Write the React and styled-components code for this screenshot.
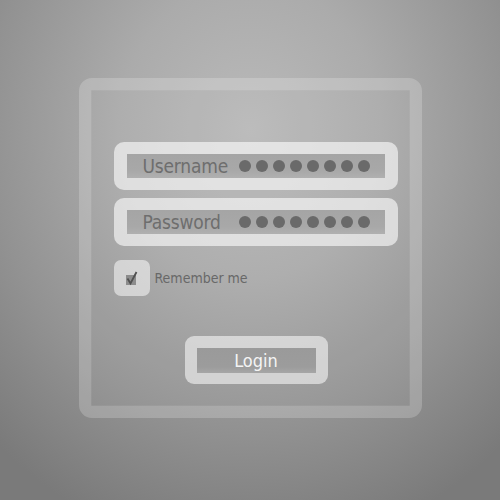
import React from "react";
import styled, { createGlobalStyle } from "styled-components";

const Global = createGlobalStyle`
  html, body { margin: 0; padding: 0; }
  body {
    width: 500px;
    height: 500px;
    overflow: hidden;
    font-family: "DejaVu Sans Condensed", "DejaVu Sans", sans-serif;
  }
`;

const Page = styled.div`
  width: 500px;
  height: 500px;
  box-sizing: border-box;
  padding-top: 78px;
  display: flex;
  justify-content: center;
  align-items: flex-start;
  background: radial-gradient(
    ellipse 75% 85% at 50% 26%,
    #bababa 0%,
    #ababab 35%,
    #929292 70%,
    #7a7a7a 100%
  );
`;

const Frame = styled.div`
  width: 343px;
  height: 340px;
  box-sizing: border-box;
  border: 12px solid rgba(255, 255, 255, 0.2);
  border-radius: 13px;
  box-shadow: inset 0 0 0 1px rgba(255, 255, 255, 0.05);
`;

const Panel = styled.div`
  height: 100%;
  box-sizing: border-box;
  padding: 52px 12px 0 23px;
  background: rgba(255, 255, 255, 0.04);
  display: flex;
  flex-direction: column;
  align-items: flex-start;
`;

const Field = styled.div`
  width: 284px;
  height: 48px;
  box-sizing: border-box;
  padding: 12px 13px;
  border-radius: 10px;
  background: rgba(255, 255, 255, 0.6);
  margin-bottom: ${(p) => p.$gap || 0}px;
`;

const Strip = styled.div`
  height: 24px;
  display: flex;
  align-items: center;
  padding-left: 16px;
  gap: 10px;
  background: linear-gradient(#a5a5a5, #a8a8a8 70%, #b0b0b0);
`;

const Label = styled.span`
  font-size: 19px;
  color: #6e6e6e;
  line-height: 24px;
  letter-spacing: -0.2px;
  width: ${(p) => p.$w}px;
`;

const Dots = styled.div`
  display: flex;
  gap: 5px;
`;

const Dot = styled.span`
  width: 12px;
  height: 12px;
  border-radius: 50%;
  background: #6a6a6a;
`;

const CheckRow = styled.div`
  display: flex;
  align-items: center;
  gap: 5px;
  margin-top: 14px;
`;

const Box = styled.div`
  width: 36px;
  height: 36px;
  border-radius: 7px;
  background: rgba(255, 255, 255, 0.52);
  display: flex;
  align-items: center;
  justify-content: center;
`;

const CheckText = styled.span`
  font-size: 14px;
  color: #686868;
`;

const LoginPill = styled.div`
  margin-top: 40px;
  margin-left: 71px;
  width: 143px;
  height: 48px;
  box-sizing: border-box;
  padding: 12px;
  border-radius: 9px;
  background: rgba(255, 255, 255, 0.55);
`;

const LoginButton = styled.div`
  height: 25px;
  display: flex;
  align-items: center;
  justify-content: center;
  background: linear-gradient(#9a9a9a, #9c9c9c 75%, #a6a6a6);
  color: #f4f4f4;
  font-size: 18px;
`;

const Input = ({ label, w, gap }) => (
  <Field $gap={gap}>
    <Strip>
      <Label $w={w}>{label}</Label>
      <Dots>
        {Array.from({ length: 8 }).map((_, i) => (
          <Dot key={i} />
        ))}
      </Dots>
    </Strip>
  </Field>
);

export default function App() {
  return (
    <>
      <Global />
      <Page>
        <Frame>
          <Panel>
            <Input label="Username" w={86} gap={8} />
            <Input label="Password" w={86} />
            <CheckRow>
              <Box>
                <svg width="16" height="16" viewBox="0 0 16 16">
                  <rect x="2" y="5" width="10" height="10" fill="#8c8c8c" />
                  <path
                    d="M3.5 8.5 L6.5 13.5 L12.5 2"
                    fill="none"
                    stroke="#505050"
                    strokeWidth="1.8"
                  />
                </svg>
              </Box>
              <CheckText>Remember me</CheckText>
            </CheckRow>
            <LoginPill>
              <LoginButton>Login</LoginButton>
            </LoginPill>
          </Panel>
        </Frame>
      </Page>
    </>
  );
}
